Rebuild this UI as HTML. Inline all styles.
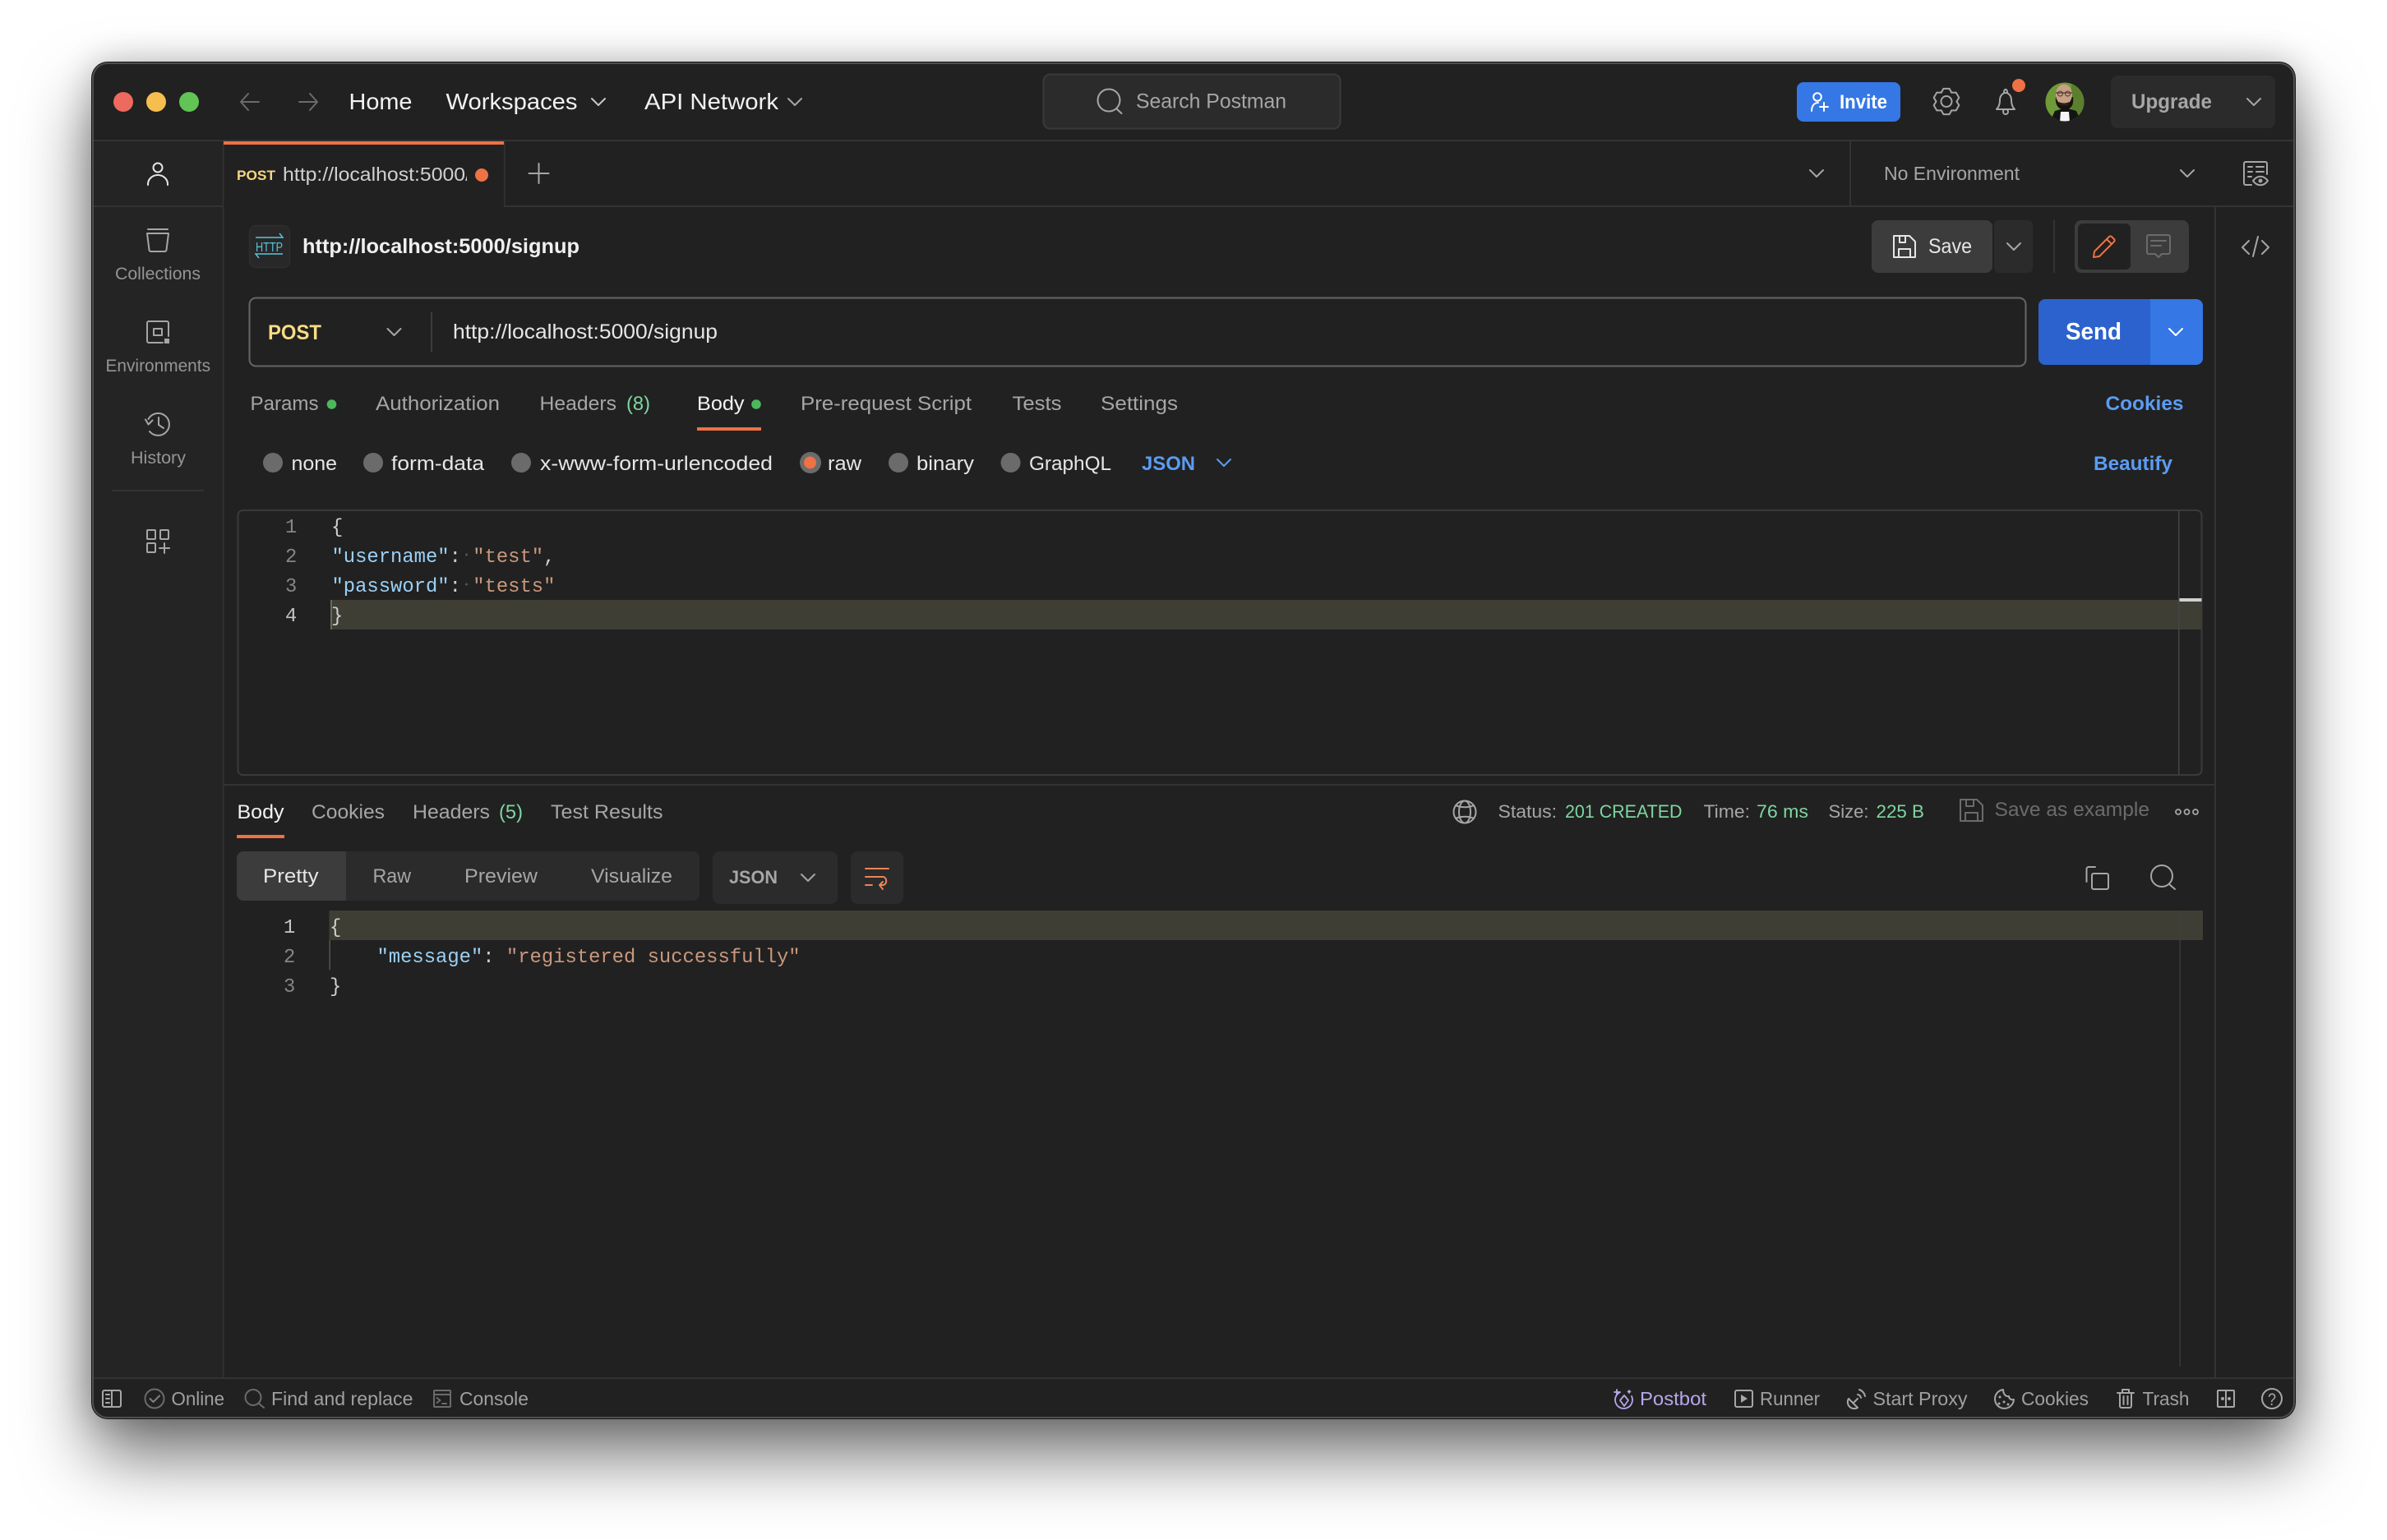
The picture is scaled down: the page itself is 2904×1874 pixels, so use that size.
<!DOCTYPE html>
<html lang="en"><head><meta charset="utf-8"><title>Postman</title>
<style>
html,body{margin:0;padding:0;background:#fff;width:2904px;height:1874px;overflow:hidden}
#sh{position:absolute;left:111px;top:75px;width:2682px;height:1652px;border-radius:20px;box-shadow:0 44px 84px rgba(0,0,0,.56),0 0 40px rgba(0,0,0,.2)}
svg{position:absolute;left:0;top:0}
text{font-family:"Liberation Sans",sans-serif;font-size:24px;fill:#a6a6a6;white-space:pre}
.w{fill:#e6e6e6}.g{fill:#7ed6a0}.b{font-weight:bold}.bl{fill:#5b9cf2;font-weight:bold}
.s{font-size:21px;fill:#959595}.st{font-size:23px;fill:#a0a0a0}.r{font-size:23px;fill:#a6a6a6}
.m{font-family:"Liberation Mono",monospace;font-size:23.85px;fill:#cfcfcf}
.ln{font-family:"Liberation Mono",monospace;font-size:23.76px;fill:#858585}
.k{fill:#9cd0f4}.v{fill:#c9987c}
.i{fill:none;stroke:#a6a6a6;stroke-width:2;stroke-linecap:round;stroke-linejoin:round}
.d{fill:none;stroke:#6b6b6b;stroke-width:2;stroke-linecap:round;stroke-linejoin:round}
.wi{fill:none;stroke:#e6e6e6;stroke-width:2;stroke-linecap:round;stroke-linejoin:round}
</style></head><body>
<div id="sh"></div>
<svg width="2904" height="1874" viewBox="0 0 2904 1874" xmlns="http://www.w3.org/2000/svg">
<defs>
<path id="ch" d="M-8-4L0 4L8-4" fill="none" stroke-width="2" stroke-linecap="round" stroke-linejoin="round"/>
<path id="t" d="M-6.25-10.83L-3.6-15.6H3.6L6.25-10.83"/>
<clipPath id="av"><circle cx="2512" cy="124" r="23.5"/></clipPath>
</defs>

<!-- window -->
<rect x="111" y="75" width="2682" height="1652" rx="20" fill="#141414"/>
<rect x="112" y="76" width="2680" height="1650" rx="19" fill="#4f4f4f"/>
<rect x="114" y="78" width="2676" height="1646" rx="17" fill="#212121"/>
<rect x="114" y="172" width="157" height="1505" fill="#242424"/>

<!-- dividers -->
<g fill="#333">
<rect x="114" y="170" width="2676" height="2"/>
<rect x="114" y="250" width="2676" height="2"/>
<rect x="114" y="1676" width="2676" height="2"/>
<rect x="271" y="172" width="1.5" height="1504"/>
<rect x="613" y="172" width="1.5" height="80"/>
<rect x="2250" y="172" width="2" height="78"/>
<rect x="2694" y="252" width="2" height="1424"/>
<rect x="272" y="954" width="2422" height="2"/>
<rect x="136" y="596" width="112" height="2"/>
</g>
<rect x="272" y="248" width="341" height="4" fill="#212121"/>

<!-- traffic lights -->
<circle cx="150" cy="124" r="12" fill="#ee6a5e"/>
<circle cx="190" cy="124" r="12" fill="#f6be4f"/>
<circle cx="230" cy="124" r="12" fill="#61c454"/>

<!-- nav -->
<path class="d" d="M315 124H293M302 114L293 124L302 134"/>
<path class="d" d="M364 124H386M377 114L386 124L377 134"/>
<text x="424.500" y="133" style="font-size:28px;fill:#f2f2f2" textLength="77" lengthAdjust="spacingAndGlyphs">Home</text>
<text x="542.500" y="133" style="font-size:28px;fill:#f2f2f2" textLength="160" lengthAdjust="spacingAndGlyphs">Workspaces</text>
<use href="#ch" x="728" y="124" stroke="#c8c8c8"/>
<text x="784" y="133" style="font-size:28px;fill:#f2f2f2" textLength="163" lengthAdjust="spacingAndGlyphs">API Network</text>
<use href="#ch" x="967" y="124" stroke="#a6a6a6"/>

<!-- search -->
<rect x="1269.5" y="90.5" width="361" height="66" rx="8" fill="#2b2b2b" stroke="#3a3a3a" stroke-width="2"/>
<circle cx="1349" cy="122" r="13.5" class="i"/>
<path class="i" d="M1358 132L1364.5 138"/>
<text x="1382" y="131.5" style="font-size:25px" textLength="183" lengthAdjust="spacingAndGlyphs">Search Postman</text>

<!-- invite -->
<rect x="2186" y="100" width="126" height="48" rx="8" fill="#3577e5"/>
<circle cx="2211" cy="118" r="4.8" fill="none" stroke="#fff" stroke-width="2"/>
<path d="M2204 135c0-6 3-10 8-10M2219 125v10M2214 130h10" fill="none" stroke="#fff" stroke-width="2" stroke-linecap="round"/>
<text x="2238" y="132" class="b" style="fill:#fff;font-size:24px" textLength="58" lengthAdjust="spacingAndGlyphs">Invite</text>

<!-- gear -->
<g transform="translate(2368 123.5)" class="i">
<use href="#t"/><use href="#t" transform="rotate(60)"/><use href="#t" transform="rotate(120)"/><use href="#t" transform="rotate(180)"/><use href="#t" transform="rotate(240)"/><use href="#t" transform="rotate(300)"/>
<circle r="6.5"/>
</g>
<!-- bell -->
<path class="i" d="M2429 133c3-3 4-6 4-11c0-5 3-9 7-9s7 4 7 9c0 5 1 8 4 11zM2438 112.500c0-5 4-5 4 0"/>
<circle cx="2440" cy="136" r="3" class="i"/>
<circle cx="2456" cy="104" r="8" fill="#ef7144"/>

<!-- avatar -->
<g clip-path="url(#av)">
<rect x="2488" y="100" width="48" height="48" fill="#6f9a38"/>
<rect x="2520" y="100" width="16" height="48" fill="#5c7f2e"/>
<path d="M2494 148l6-13 10-3h6l10 3 6 13z" fill="#141414"/>
<path d="M2507 136h10l1 12h-12z" fill="#f4f4f4"/>
<path d="M2501 118h21c1 8-1 15-10 16c-9-1-12-8-11-16z" fill="#15130f"/>
<ellipse cx="2511" cy="115" rx="10" ry="12.500" fill="#c8a083"/>
<path d="M2505 124c3 2 9 2 12 0v3c-3 2-9 2-12 0z" fill="#2b2118"/>
<path d="M2501 113h20" stroke="#5a4a40" stroke-width="1.500" fill="none"/>
<circle cx="2506.500" cy="114" r="3" fill="none" stroke="#4a3d34" stroke-width="1"/>
<circle cx="2515.500" cy="114" r="3" fill="none" stroke="#4a3d34" stroke-width="1"/>
</g>

<!-- upgrade -->
<rect x="2568" y="92" width="200" height="64" rx="8" fill="#2b2b2b"/>
<text x="2593" y="132" class="b" style="font-size:25px;fill:#a6a6a6" textLength="98" lengthAdjust="spacingAndGlyphs">Upgrade</text>
<use href="#ch" x="2742" y="124" stroke="#a6a6a6"/>

<!-- tab -->
<rect x="272" y="172" width="341" height="4" fill="#ef7144"/>
<text x="288" y="219" class="b" style="font-size:17px;fill:#f5d77f" textLength="47" lengthAdjust="spacingAndGlyphs">POST</text>
<text x="344" y="220" class="w" style="font-size:23px;fill:#d0d0d0" textLength="229" lengthAdjust="spacingAndGlyphs">http://localhost:5000/</text>
<rect x="568" y="196" width="10" height="34" fill="#212121"/>
<circle cx="586" cy="213" r="8" fill="#ef7144"/>
<path class="i" d="M655.500 199V223M643.500 211H667.500"/>
<use href="#ch" x="2210" y="211" stroke="#a6a6a6"/>
<text x="2292" y="219" style="font-size:23.500px" textLength="165" lengthAdjust="spacingAndGlyphs">No Environment</text>
<use href="#ch" x="2661" y="211" stroke="#a6a6a6"/>
<path class="i" d="M2739 225H2732a2 2 0 0 1-2-2V199a2 2 0 0 1 2-2H2756a2 2 0 0 1 2 2V212M2735 203h5M2745 203h9M2735 209h5M2745 209h9M2735 215h4"/>
<path class="i" d="M2741 220c5-7 13-7 18 0c-5 7-13 7-18 0z"/>
<circle cx="2750" cy="220" r="2.500" fill="#a6a6a6"/>

<!-- sidebar -->
<circle cx="192" cy="204" r="5.500" class="wi"/>
<path class="wi" d="M180 225v-1a12 11 0 0 1 24 0v1"/>
<path class="i" d="M180 279H204"/>
<path class="i" d="M179 284H205L202.500 304a2 2 0 0 1-2 2H183.500a2 2 0 0 1-2-2Z"/>
<text x="140" y="340" class="s" textLength="104" lengthAdjust="spacingAndGlyphs">Collections</text>
<path class="i" d="M198 417H181a2 2 0 0 1-2-2V393a2 2 0 0 1 2-2H203a2 2 0 0 1 2 2V409"/>
<rect x="187" y="400" width="10" height="8" class="i"/>
<rect x="200" y="412" width="6" height="6" fill="#a6a6a6"/>
<text x="128.500" y="452" class="s" textLength="127.500" lengthAdjust="spacingAndGlyphs">Environments</text>
<path class="i" d="M180.500 510A13.500 13.500 0 1 1 182 525M177 510.500l3.500 6l5-5M193 508v9l6 4"/>
<text x="159" y="564" class="s" textLength="67" lengthAdjust="spacingAndGlyphs">History</text>
<rect x="179" y="645" width="10" height="11" rx="1" class="i"/>
<rect x="195" y="645" width="10" height="11" rx="1" class="i"/>
<rect x="179" y="661" width="10" height="11" rx="1" class="i"/>
<path class="i" d="M200 661V673M194 667H206"/>

<!-- title -->
<rect x="303.500" y="274.500" width="49" height="51" rx="8" fill="#282828" stroke="#2e2e2e" stroke-width="1.500"/>
<path d="M311 289H344L340 284M344 309H311L315 314" fill="none" stroke="#5cc4da" stroke-width="1.500"/>
<text x="311" y="306" style="font-size:16px;fill:#5cc4da" textLength="33" lengthAdjust="spacingAndGlyphs">HTTP</text>
<text x="368" y="308" class="b" style="font-size:25px;fill:#f0f0f0" textLength="337" lengthAdjust="spacingAndGlyphs">http://localhost:5000/signup</text>

<!-- save -->
<rect x="2277" y="268" width="147" height="64" rx="8" fill="#3c3c3c"/>
<path class="wi" d="M2304 287H2323L2330 294V313H2304ZM2311 287V295H2318V287M2310 313V303H2324V313"/>
<text x="2346" y="308" class="w" style="font-size:25px" textLength="53" lengthAdjust="spacingAndGlyphs">Save</text>
<rect x="2426" y="268" width="47" height="64" rx="6" fill="#2b2b2b"/>
<use href="#ch" x="2450" y="300" stroke="#a6a6a6"/>
<rect x="2498" y="268" width="2" height="64" fill="#333"/>
<rect x="2524" y="268" width="139" height="64" rx="8" fill="#3c3c3c"/>
<rect x="2528" y="272" width="64" height="56" rx="6" fill="#212121"/>
<path d="M2547 313l1-7L2566 288a2 2 0 0 1 3 0l3 3a2 2 0 0 1 0 3L2554 312zM2563 291l6 6" fill="none" stroke="#ef7144" stroke-width="2" stroke-linejoin="round" stroke-linecap="round"/>
<path class="d" d="M2612 288a2 2 0 0 1 2-2H2638a2 2 0 0 1 2 2V307a2 2 0 0 1-2 2H2630L2626 313L2622 309H2614a2 2 0 0 1-2-2ZM2617 293H2635M2617 299H2629"/>
<path class="i" d="M2736 293L2728 301L2736 309M2752 293L2760 301L2752 309M2741 312L2747 288"/>

<!-- url bar -->
<rect x="303.500" y="362.500" width="2161" height="83" rx="8" fill="#212121" stroke="#666" stroke-width="2"/>
<text x="326" y="413" class="b" style="font-size:25px;fill:#f7dc82" textLength="65" lengthAdjust="spacingAndGlyphs">POST</text>
<use href="#ch" x="479.500" y="404" stroke="#a6a6a6"/>
<rect x="524" y="380" width="2" height="48" fill="#3c3c3c"/>
<text x="551" y="412" class="w" style="font-size:25px" textLength="322" lengthAdjust="spacingAndGlyphs">http://localhost:5000/signup</text>
<path d="M2488 364H2616V444H2488a8 8 0 0 1-8-8V372a8 8 0 0 1 8-8z" fill="#2b62cd"/>
<path d="M2616 364H2672a8 8 0 0 1 8 8V436a8 8 0 0 1-8 8H2616z" fill="#3577e5"/>
<text x="2513" y="413" class="b" style="font-size:29px;fill:#fff" textLength="68" lengthAdjust="spacingAndGlyphs">Send</text>
<use href="#ch" x="2647" y="404" stroke="#fff"/>

<!-- request tabs -->
<text x="304.500" y="499" textLength="83" lengthAdjust="spacingAndGlyphs">Params</text>
<circle cx="403.500" cy="492" r="5.800" fill="#4cb85c"/>
<text x="457" y="499" textLength="151" lengthAdjust="spacingAndGlyphs">Authorization</text>
<text x="656.500" y="499" textLength="93.500" lengthAdjust="spacingAndGlyphs">Headers</text>
<text x="762" y="499" class="g" textLength="29" lengthAdjust="spacingAndGlyphs">(8)</text>
<text x="848" y="499" style="fill:#f2f2f2" textLength="57.500" lengthAdjust="spacingAndGlyphs">Body</text>
<circle cx="920" cy="492" r="5.800" fill="#4cb85c"/>
<rect x="848" y="520" width="78" height="4" fill="#ef7144"/>
<text x="974" y="499" textLength="208" lengthAdjust="spacingAndGlyphs">Pre-request Script</text>
<text x="1231.500" y="499" textLength="60" lengthAdjust="spacingAndGlyphs">Tests</text>
<text x="1339" y="499" textLength="94" lengthAdjust="spacingAndGlyphs">Settings</text>
<text x="2561.500" y="499" class="bl" textLength="95" lengthAdjust="spacingAndGlyphs">Cookies</text>

<!-- body types -->
<g fill="#6b6b6b">
<circle cx="332" cy="563" r="12"/><circle cx="454" cy="563" r="12"/><circle cx="634" cy="563" r="12"/>
<circle cx="986" cy="563" r="13"/><circle cx="1093" cy="563" r="12"/><circle cx="1229.500" cy="563" r="12"/>
</g>
<circle cx="985.500" cy="563" r="7.500" fill="#ef7144"/>
<text x="354.500" y="572" class="w" textLength="55.500" lengthAdjust="spacingAndGlyphs">none</text>
<text x="476" y="572" class="w" textLength="113" lengthAdjust="spacingAndGlyphs">form-data</text>
<text x="657" y="572" class="w" textLength="283" lengthAdjust="spacingAndGlyphs">x-www-form-urlencoded</text>
<text x="1007" y="572" class="w" textLength="41" lengthAdjust="spacingAndGlyphs">raw</text>
<text x="1115" y="572" class="w" textLength="70" lengthAdjust="spacingAndGlyphs">binary</text>
<text x="1252" y="572" class="w" textLength="100" lengthAdjust="spacingAndGlyphs">GraphQL</text>
<text x="1389" y="572" class="bl" textLength="65" lengthAdjust="spacingAndGlyphs">JSON</text>
<use href="#ch" x="1489" y="563" stroke="#5b9cf2"/>
<text x="2547" y="572" class="bl" textLength="96" lengthAdjust="spacingAndGlyphs">Beautify</text>

<!-- editor -->
<rect x="289.500" y="621" width="2389" height="322" rx="6" fill="#212121" stroke="#3a3a3a" stroke-width="2"/>
<rect x="402" y="730" width="2276.500" height="36" fill="#3e3e34"/>
<rect x="2650" y="622" width="1.500" height="320" fill="#454545"/>
<rect x="2651.500" y="728" width="27" height="4" fill="#cfcfcf"/>
<rect x="402" y="730" width="2" height="36" fill="#6a6a5c"/>
<text class="ln" x="347" y="648">1</text>
<text class="ln" x="347" y="684">2</text>
<text class="ln" x="347" y="720">3</text>
<text class="ln" x="347" y="756" style="fill:#c6c6c6">4</text>
<text class="m" x="403" y="648">{</text>
<text class="m" x="403.500" y="684"><tspan class="k">"username"</tspan>:<tspan fill="#555"> </tspan><tspan class="v">"test"</tspan>,</text>
<text class="m" x="403.500" y="720"><tspan class="k">"password"</tspan>:<tspan fill="#555"> </tspan><tspan class="v">"tests"</tspan></text>
<circle cx="567.500" cy="675" r="1.500" fill="#555"/><circle cx="567.500" cy="711" r="1.500" fill="#555"/>
<text class="m" x="403" y="756">}</text>

<!-- response header -->
<text x="288.500" y="996" style="fill:#f2f2f2" textLength="57" lengthAdjust="spacingAndGlyphs">Body</text>
<rect x="288" y="1016" width="58" height="4" fill="#ef7144"/>
<text x="379" y="996" textLength="89" lengthAdjust="spacingAndGlyphs">Cookies</text>
<text x="502" y="996" textLength="94" lengthAdjust="spacingAndGlyphs">Headers</text>
<text x="607" y="996" class="g" textLength="29" lengthAdjust="spacingAndGlyphs">(5)</text>
<text x="670" y="996" textLength="136.500" lengthAdjust="spacingAndGlyphs">Test Results</text>

<circle cx="1782" cy="988" r="13.500" class="i"/>
<ellipse cx="1782" cy="988" rx="7" ry="13.500" class="i"/>
<path class="i" d="M1771 980c6 3 16 3 22 0M1771 996c6-3 16-3 22 0"/>
<text x="1822.500" y="995" style="font-size:22.500px" textLength="71.500" lengthAdjust="spacingAndGlyphs">Status:</text>
<text x="1904" y="995" class="g" style="font-size:22.500px" textLength="142.500" lengthAdjust="spacingAndGlyphs">201 CREATED</text>
<text x="2072.500" y="995" style="font-size:22.500px" textLength="56.500" lengthAdjust="spacingAndGlyphs">Time:</text>
<text x="2137" y="995" class="g" style="font-size:22.500px" textLength="63" lengthAdjust="spacingAndGlyphs">76 ms</text>
<text x="2224.500" y="995" style="font-size:22.500px" textLength="49" lengthAdjust="spacingAndGlyphs">Size:</text>
<text x="2282.500" y="995" class="g" style="font-size:22.500px" textLength="58.500" lengthAdjust="spacingAndGlyphs">225 B</text>
<path class="d" d="M2385 973H2405L2412 980V999H2385ZM2392 973V981H2401V973M2391 999V989H2406V999"/>
<text x="2426.500" y="993" style="fill:#6b6b6b" textLength="188.500" lengthAdjust="spacingAndGlyphs">Save as example</text>
<g fill="none" stroke="#a6a6a6" stroke-width="1.800"><circle cx="2650" cy="988" r="3"/><circle cx="2660.500" cy="988" r="3"/><circle cx="2671" cy="988" r="3"/></g>

<!-- response toolbar -->
<rect x="288" y="1036" width="563" height="60" rx="8" fill="#2b2b2b"/>
<path d="M296 1036H421V1096H296a8 8 0 0 1-8-8V1044a8 8 0 0 1 8-8z" fill="#3c3c3c"/>
<text x="320" y="1074" class="w" textLength="67.500" lengthAdjust="spacingAndGlyphs">Pretty</text>
<text x="453.500" y="1074" textLength="46.500" lengthAdjust="spacingAndGlyphs">Raw</text>
<text x="565" y="1074" textLength="89" lengthAdjust="spacingAndGlyphs">Preview</text>
<text x="719" y="1074" textLength="99" lengthAdjust="spacingAndGlyphs">Visualize</text>
<rect x="867" y="1036" width="152" height="64" rx="8" fill="#2b2b2b"/>
<text x="887" y="1075" class="b" style="font-size:22px" textLength="59" lengthAdjust="spacingAndGlyphs">JSON</text>
<use href="#ch" x="983" y="1068" stroke="#a6a6a6"/>
<rect x="1035" y="1036" width="64" height="64" rx="8" fill="#2b2b2b"/>
<path d="M1053 1057H1081M1053 1067H1075a5.500 5.500 0 0 1 0 10H1071M1053 1077H1061M1074 1073L1070 1077L1074 1082" fill="none" stroke="#ef8454" stroke-width="2" stroke-linecap="round" stroke-linejoin="round"/>
<path class="i" d="M2549 1055H2541a2.500 2.500 0 0 0-2.500 2.500V1073"/>
<rect x="2545" y="1063" width="20" height="19" rx="2" class="i"/>
<circle cx="2630" cy="1066" r="13" class="i"/>
<path class="i" d="M2639 1076L2646 1082"/>

<!-- response body -->
<rect x="400.500" y="1108" width="2279.500" height="36" fill="#3e3e34"/>
<rect x="2651.500" y="1108" width="1.200" height="555" fill="#3f3f3f"/>
<rect x="400.500" y="1144" width="1.500" height="36" fill="#555"/>
<text class="ln" x="345" y="1135" style="fill:#c6c6c6">1</text>
<text class="ln" x="345" y="1171">2</text>
<text class="ln" x="345" y="1207">3</text>
<text class="m" x="401" y="1135">{</text>
<text class="m" x="458.500" y="1171"><tspan class="k">"message"</tspan>: <tspan class="v">"registered successfully"</tspan></text>
<text class="m" x="401" y="1207">}</text>

<!-- status bar -->
<rect x="125" y="1692" width="22" height="20" rx="2" class="i"/>
<path class="i" d="M136 1692V1712M129 1697H133M129 1702H133M129 1707H133"/>
<circle cx="188" cy="1702" r="11.500" class="d"/>
<path class="i" style="stroke:#808080" d="M182.500 1702l4 4l7.500-7.500"/>
<text x="208.500" y="1710" class="st" textLength="64.500" lengthAdjust="spacingAndGlyphs">Online</text>
<circle cx="308" cy="1700.500" r="9.500" class="d"/>
<path class="d" d="M315 1708L321 1713"/>
<text x="330" y="1710" class="st" textLength="172.500" lengthAdjust="spacingAndGlyphs">Find and replace</text>
<rect x="528" y="1692" width="20" height="20" rx="1" class="d"/>
<path class="d" d="M528 1697H548M531.500 1701l4 3l-4 3M538 1708H543"/>
<text x="559" y="1710" class="st" textLength="84" lengthAdjust="spacingAndGlyphs">Console</text>

<path d="M1971 1694a10.500 10.500 0 1 0 14 5M1976 1698l5 6l-5 7l-5-7zM1967 1691v6M1964 1694h6M1982 1692v3M1980.500 1693.500h3" fill="none" stroke="#b9a6ea" stroke-width="1.800" stroke-linecap="round" stroke-linejoin="round"/>
<text x="1995" y="1710" class="st" style="fill:#b9a6ea" textLength="81" lengthAdjust="spacingAndGlyphs">Postbot</text>
<rect x="2111" y="1692" width="21" height="20" rx="2" class="i"/>
<path d="M2118 1697l8 5l-8 5z" fill="#a6a6a6"/>
<text x="2141" y="1710" class="st" textLength="73" lengthAdjust="spacingAndGlyphs">Runner</text>
<path class="i" d="M2249 1702a8 8 0 0 0 11 11zM2255 1707l5-5M2260 1697a5 5 0 0 1 4 4M2262 1691a11 11 0 0 1 7 8"/>
<text x="2278.500" y="1710" class="st" textLength="115" lengthAdjust="spacingAndGlyphs">Start Proxy</text>
<path class="i" d="M2437 1691a11.500 11.500 0 1 0 13 12c-3 1-6-1-6-4c-4 1-7-3-7-8z"/>
<g fill="#a6a6a6"><circle cx="2433" cy="1700" r="1.500"/><circle cx="2438" cy="1706" r="1.500"/><circle cx="2432" cy="1708" r="1.500"/><circle cx="2443" cy="1709" r="1.500"/></g>
<text x="2459" y="1710" class="st" textLength="82" lengthAdjust="spacingAndGlyphs">Cookies</text>
<path class="i" d="M2576 1695H2596M2582 1695V1691H2590V1695M2579 1695V1711a2 2 0 0 0 2 2H2591a2 2 0 0 0 2-2V1695M2583.500 1699V1709M2588.500 1699V1709"/>
<text x="2606.500" y="1710" class="st" textLength="57" lengthAdjust="spacingAndGlyphs">Trash</text>
<rect x="2698" y="1692" width="20" height="20" rx="1" class="i"/>
<path class="i" d="M2708 1692V1712"/>
<circle cx="2704" cy="1702" r="2" fill="#a6a6a6"/><circle cx="2712" cy="1702" r="2" fill="#a6a6a6"/>
<circle cx="2764" cy="1702" r="12" class="i"/>
<text x="2759" y="1710" style="font-size:21px" textLength="10" lengthAdjust="spacingAndGlyphs">?</text>
</svg>
</body></html>
